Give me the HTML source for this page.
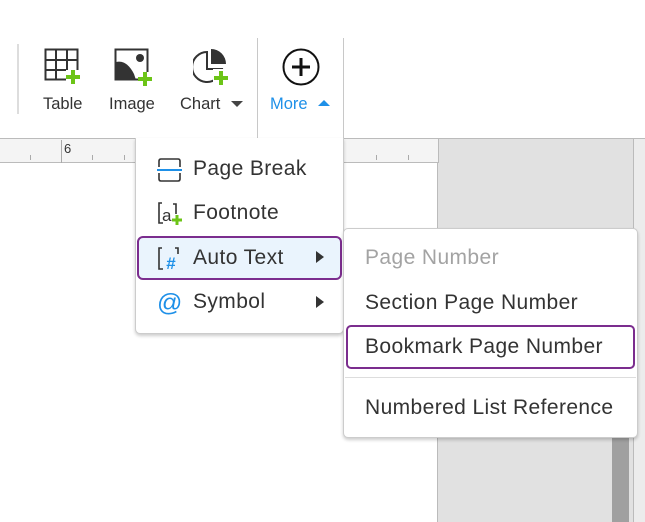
<!DOCTYPE html>
<html><head><meta charset="utf-8"><style>
*{margin:0;padding:0;box-sizing:border-box}
body{width:645px;height:522px;overflow:hidden;background:#fff;position:relative;font-family:"Liberation Sans",sans-serif;color:#333}
.a{position:absolute}
.lbl{position:absolute;top:95px;font-size:16.5px;color:#333}
.mi{position:absolute;font-size:21px;letter-spacing:0.4px;color:#333;white-space:nowrap}
</style></head><body>
<!-- toolbar -->
<div class="a" style="left:17px;top:44px;width:2px;height:70px;background:#ddd"></div>
<div class="a" style="left:257px;top:38px;width:1px;height:101px;background:#c8c8c8"></div>
<div class="a" style="left:343px;top:38px;width:1px;height:101px;background:#c8c8c8"></div>
<div class="a" style="left:0;top:138px;width:645px;height:1px;background:#bbb"></div>
<!-- table icon -->
<svg class="a" style="left:44px;top:48px" width="40" height="38" viewBox="0 0 40 38">
<rect x="1.5" y="1.5" width="32" height="30" fill="none" stroke="#333" stroke-width="2"/>
<path d="M12 2v30M23 2v20M2 12h31M2 22h20" stroke="#333" stroke-width="2"/>
<rect x="22" y="22" width="14" height="12" fill="#fff"/>
<path d="M29 22v14M22 29h14" stroke="#6cc417" stroke-width="4"/></svg>
<!-- image icon -->
<svg class="a" style="left:114px;top:48px" width="42" height="38" viewBox="0 0 42 38">
<rect x="1.5" y="1.5" width="32" height="30" fill="none" stroke="#333" stroke-width="2"/>
<path d="M2 14c8-2 14 4 18 12l2 6H2z" fill="#333"/>
<circle cx="26" cy="10" r="4" fill="#333"/>
<rect x="24" y="24" width="14" height="13" fill="#fff"/>
<path d="M31 24v14M24 31h14" stroke="#6cc417" stroke-width="4"/></svg>
<!-- chart icon -->
<svg class="a" style="left:193px;top:47px" width="40" height="40" viewBox="0 0 40 40">
<path d="M14 5A15 15 0 1 0 29 22H14z" fill="none" stroke="#333" stroke-width="2"/>
<path d="M18 2A15 15 0 0 1 33 17H18z" fill="#333"/>
<rect x="20" y="22" width="16" height="16" fill="#fff"/>
<path d="M28 24v14M21 31h14" stroke="#6cc417" stroke-width="4"/></svg>
<div class="lbl" style="left:43px">Table</div>
<div class="lbl" style="left:109px">Image</div>
<div class="lbl" style="left:180px">Chart</div>
<div class="a" style="left:231px;top:101px;border:6px solid transparent;border-top:6px solid #444;border-bottom:0"></div>
<!-- more -->
<svg class="a" style="left:281px;top:48px" width="40" height="40" viewBox="0 0 40 40">
<circle cx="20" cy="19" r="17.5" fill="none" stroke="#111" stroke-width="2"/>
<path d="M20 10v18M11 19h18" stroke="#111" stroke-width="3"/></svg>
<div class="lbl" style="left:270px;color:#1e90e8">More</div>
<div class="a" style="left:318px;top:100px;border:6px solid transparent;border-bottom:6px solid #1e90e8;border-top:0"></div>
<!-- ruler -->
<div class="a" style="left:0;top:139px;width:439px;height:24px;background:#f4f4f4;border-bottom:1px solid #bbb;border-right:1px solid #bbb"></div>
<div class="a" style="left:61px;top:140px;width:1px;height:23px;background:#aaa"></div>
<div class="a" style="left:64px;top:141px;font-size:13px;color:#333">6</div>
<div class="a" style="left:30px;top:155px;width:1px;height:5px;background:#aaa"></div>
<div class="a" style="left:92px;top:155px;width:1px;height:5px;background:#aaa"></div>
<div class="a" style="left:124px;top:155px;width:1px;height:5px;background:#aaa"></div>
<div class="a" style="left:376px;top:155px;width:1px;height:5px;background:#aaa"></div>
<div class="a" style="left:408px;top:155px;width:1px;height:5px;background:#aaa"></div>
<!-- gray area -->
<div class="a" style="left:437px;top:163px;width:196px;height:359px;background:#e1e1e1;border-left:1px solid #bbb"></div>
<div class="a" style="left:439px;top:139px;width:194px;height:24px;background:#e1e1e1"></div>
<div class="a" style="left:633px;top:139px;width:12px;height:383px;background:#ececec;border-left:1px solid #bbb"></div>
<div class="a" style="left:612px;top:438px;width:17px;height:84px;background:#a0a0a0"></div>
<!-- menu 1 -->
<div class="a" style="left:135px;top:138px;width:209px;height:196px;background:#fff;border:1px solid #ccc;border-top:none;border-radius:0 0 5px 5px;box-shadow:0 2px 3px rgba(0,0,0,.2)"></div>
<div class="a" style="left:137px;top:236px;width:205px;height:44px;background:#eaf4fd;border:2px solid #7b2d8e;border-radius:6px"></div>
<svg class="a" style="left:157px;top:157px" width="26" height="160" viewBox="0 0 26 160">
<path d="M2 10V4q0-2 2-2h17q2 0 2 2v6M2 16v6q0 2 2 2h17q2 0 2-2v-6" fill="none" stroke="#333" stroke-width="1.6"/>
<path d="M0 13h25" stroke="#1e90e8" stroke-width="2"/>
<path d="M5 46H2V66h4M16 47h3v10" fill="none" stroke="#333" stroke-width="1.6"/>
<text x="5" y="64" font-size="17" fill="#333" font-family="Liberation Sans">a</text>
<path d="M20 58v10M15 63h10" stroke="#6cc417" stroke-width="3"/>
<path d="M5 91H2v21h4M18 91h3v6" fill="none" stroke="#333" stroke-width="1.6"/>
<text x="9" y="112" font-size="17" fill="#1e90e8" font-style="italic" font-weight="bold" font-family="Liberation Sans">#</text>
<text x="0" y="154" font-size="25" fill="#1e90e8" font-family="Liberation Sans">@</text>
</svg>
<div class="mi" style="left:193px;top:157px">Page Break</div>
<div class="mi" style="left:193px;top:201px">Footnote</div>
<div class="mi" style="left:193px;top:246px">Auto Text</div>
<div class="mi" style="left:193px;top:290px">Symbol</div>
<div class="a" style="left:316px;top:251px;border:6px solid transparent;border-left:8px solid #333;border-right:0"></div>
<div class="a" style="left:316px;top:296px;border:6px solid transparent;border-left:8px solid #333;border-right:0"></div>
<!-- submenu -->
<div class="a" style="left:343px;top:228px;width:295px;height:210px;background:#fff;border:1px solid #ccc;border-radius:5px;box-shadow:0 2px 3px rgba(0,0,0,.2)"></div>
<div class="a" style="left:346px;top:325px;width:289px;height:44px;border:2px solid #7b2d8e;border-radius:5px"></div>
<div class="a" style="left:345px;top:377px;width:291px;height:1px;background:#ddd"></div>
<div class="mi" style="left:365px;top:246px;color:#a3a3a3">Page Number</div>
<div class="mi" style="left:365px;top:291px">Section Page Number</div>
<div class="mi" style="left:365px;top:335px">Bookmark Page Number</div>
<div class="mi" style="left:365px;top:396px">Numbered List Reference</div>
</body></html>
